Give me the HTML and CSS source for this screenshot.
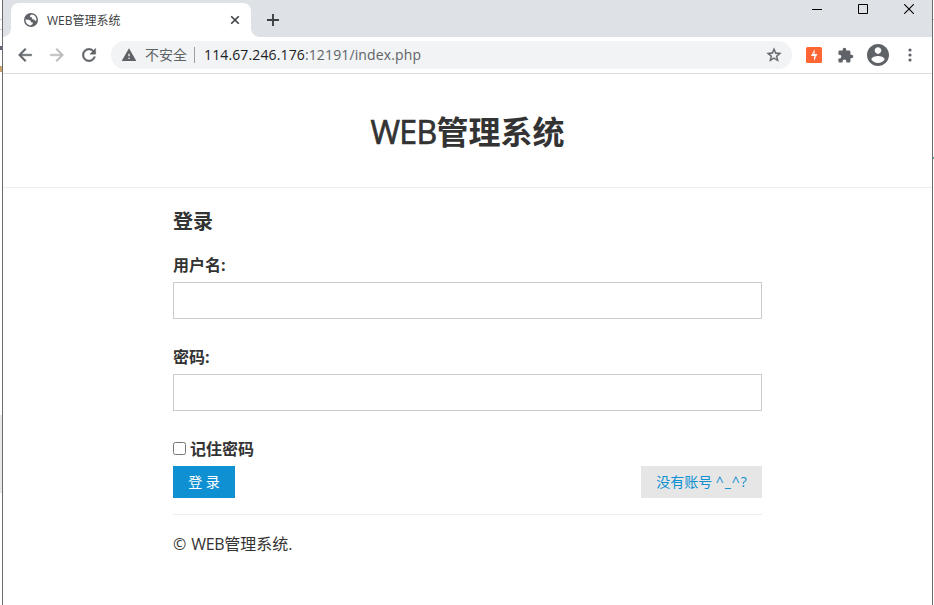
FILE: index.html
```html
<!DOCTYPE html>
<html lang="zh-CN">
<head>
<meta charset="utf-8">
<title>WEB管理系统</title>
<link rel="stylesheet" href="styles.css">
</head>
<body>
<div class="desktop">
  <div class="edge edge-left">
    <i class="sliver s1"></i><i class="sliver s2"></i><i class="sliver s3"></i><i class="sliver s4"></i><i class="sliver s5"></i>
  </div>
  <div class="window">
    <div class="tabstrip">
      <div class="tab">
        <svg class="globe" width="14" height="14" viewBox="0 0 14 14"><circle cx="7" cy="7" r="7" fill="#5f6368"/><path d="M7.600 1.600C6.200 2.200 5.900 3 6.100 3.900L8 4.600 8.300 6.300 10.200 6.500 11.200 7.900 12.500 7.300C12.500 4 10.500 1.800 7.600 1.600ZM1.500 6.500L4.800 6.700 6.900 8 6.800 9.200 8.900 9.400 8.600 11 6.500 12.500C3.500 12 1.400 9.700 1.500 6.500Z" fill="#fff"/></svg>
        <span class="tab-title">WEB<span>管理系统</span></span>
        <svg class="tab-close" width="10" height="10" viewBox="0 0 10 10"><path d="M1.200 1.200L8.800 8.800M8.800 1.200L1.200 8.800" stroke="#3c4043" stroke-width="1.600"/></svg>
      </div>
      <svg class="new-tab" width="12" height="12" viewBox="0 0 12 12"><path d="M6 0V12M0 6H12" stroke="#3c4043" stroke-width="1.900"/></svg>
      <div class="controls">
        <svg width="10" height="10" viewBox="0 0 10 10"><path d="M0 5.500H10" stroke="#000"/></svg>
        <svg width="10" height="10" viewBox="0 0 10 10"><path d="M.5.5H9.500V9.500H.5Z" fill="none" stroke="#000"/></svg>
        <svg width="10" height="10" viewBox="0 0 10 10"><path d="M.2.2L9.800 9.800M9.800.2L.2 9.800" stroke="#000" stroke-width="1.100"/></svg>
      </div>
    </div>
    <div class="toolbar">
      <svg class="nav" width="20" height="20" viewBox="0 0 24 24" fill="#5f6368" stroke="#5f6368" stroke-width=".5"><path d="M20 11H7.830l5.590-5.590L12 4l-8 8 8 8 1.410-1.410L7.830 13H20v-2z"/></svg>
      <svg class="nav" width="20" height="20" viewBox="0 0 24 24" fill="#babcbe" stroke="#babcbe" stroke-width=".5"><path d="M12 4l-1.410 1.410L16.170 11H4v2h12.170l-5.580 5.590L12 20l8-8z"/></svg>
      <svg class="nav" width="20" height="20" viewBox="0 0 24 24" fill="#5f6368" stroke="#5f6368" stroke-width=".5"><path d="M17.650 6.350C16.200 4.900 14.210 4 12 4c-4.420 0-7.990 3.580-7.990 8s3.570 8 7.990 8c3.730 0 6.840-2.550 7.730-6h-2.080c-.82 2.330-3.040 4-5.650 4-3.310 0-6-2.690-6-6s2.690-6 6-6c1.660 0 3.140.69 4.220 1.780L13 11h7V4l-2.350 2.350z"/></svg>
      <div class="omnibox">
        <svg class="warn" width="16" height="16" viewBox="0 0 24 24" fill="#5f6368"><path d="M1 21h22L12 2 1 21zm12-3h-2v-2h2v2zm0-4h-2v-4h2v4z"/></svg>
        <span class="insecure">不安全</span>
        <span class="divider"></span>
        <span class="url"><b>114.67.246.176</b>:12191/index.php</span>
        <svg class="star" width="16" height="16" viewBox="1 1 22 22" fill="#5f6368" stroke="#5f6368" stroke-width=".4"><path d="M22 9.240l-7.190-.62L12 2 9.190 8.630 2 9.240l5.460 4.730L5.820 21 12 17.270 18.180 21l-1.630-7.030L22 9.240zM12 15.400l-3.760 2.270 1-4.280-3.320-2.880 4.380-.38L12 6.100l1.710 4.040 4.380.38-3.320 2.880 1 4.280L12 15.400z"/></svg>
      </div>
      <svg class="burp" width="16" height="16" viewBox="0 0 16 16"><rect width="16" height="16" rx="1.500" fill="#ff6633"/><path d="M8.600 2.200V7.100H11.400L8 13.900V9H5L8.600 2.200Z" fill="#fff"/><path d="M7.800 5.600V7.100H6.900ZM8.800 9H9.700L8.800 10.500Z" fill="#ff6633"/></svg>
      <svg class="puzzle" width="17" height="17" viewBox="0 0 24 24" fill="#5f6368"><path d="M20.500 11H19V7c0-1.100-.9-2-2-2h-4V3.500a2.500 2.500 0 0 0-5 0V5H4c-1.100 0-1.990.9-1.990 2v3.800H3.500a2.700 2.700 0 0 1 0 5.400H2V20c0 1.100.9 2 2 2h3.800v-1.500a2.700 2.700 0 0 1 5.400 0V22H17c1.100 0 2-.9 2-2v-4h1.500a2.500 2.500 0 0 0 0-5z"/></svg>
      <svg class="avatar" width="22" height="22" viewBox="2 2 20 20" fill="#5f6368"><path d="M12 2C6.480 2 2 6.480 2 12s4.480 10 10 10 10-4.480 10-10S17.520 2 12 2zm0 3c1.660 0 3 1.340 3 3s-1.340 3-3 3-3-1.340-3-3 1.340-3 3-3zm0 14.200c-2.500 0-4.710-1.280-6-3.220.03-1.990 4-3.080 6-3.080 1.990 0 5.970 1.090 6 3.080-1.290 1.940-3.500 3.220-6 3.220z"/></svg>
      <svg class="dots" width="4" height="14" viewBox="0 0 4 14" fill="#5f6368"><circle cx="2" cy="2" r="1.600"/><circle cx="2" cy="7" r="1.600"/><circle cx="2" cy="12" r="1.600"/></svg>
    </div>
    <header class="header"><h1><span class="latin">WEB</span><span>管理系统</span></h1></header>
    <main class="content">
      <h3>登录</h3>
      <form>
        <label class="label" for="user">用户名:</label>
        <input class="field" id="user" type="text">
        <label class="label" for="pass">密码:</label>
        <input class="field" id="pass" type="password">
        <label class="remember"><input type="checkbox"><span>记住密码</span></label>
        <div class="actions">
          <button class="btn primary" type="button">登 录</button>
          <button class="btn secondary" type="button">没有账号 <span class="face">^_^?</span></button>
        </div>
      </form>
      <footer class="footer"><span class="copy">©</span><span class="brand">WEB</span>管理系统.</footer>
    </main>
  </div>
  <div class="edge edge-right"><i class="sliver r1"></i><i class="sliver r2"></i></div>
</div>
</body>
</html>
```

FILE: styles.css
```css
* { box-sizing: border-box; }
body {
  margin: 0;
  overflow: hidden;
  background: #fff;
  color: #333;
  font-family: "Open Sans", "Noto Sans CJK SC", sans-serif;
}
svg { display: block; flex: none; }
.desktop { display: grid; grid-template-columns: 2px 931px 1px; height: 605px; }
.edge { position: relative; }
.sliver { position: absolute; left: 0; width: 2px; height: 1px; background: #ccc; }
.s1 { top: 19px; }
.s2 { top: 29px; }
.s3 { top: 46px; height: 4px; background: #667; }
.s4 { top: 66px; height: 6px; background: #c9a46a; }
.s5 { top: 415px; height: 78px; background: #e8e8e8; }
.r1 { top: 19px; width: 1px; }
.r2 { top: 157px; width: 1px; height: 2px; background: #5a8; }
.window { border: solid #6b6b6d; border-width: 0 1px; }

.tabstrip { display: flex; height: 37px; background: #dee1e6; }
.tab {
  position: relative;
  display: flex;
  align-items: center;
  width: 240px;
  height: 34px;
  margin: 3px 0 0 8px;
  padding: 0 11px 0 13px;
  border-radius: 8px 8px 0 0;
  background: #fff;
}
.tab::before, .tab::after {
  content: "";
  position: absolute;
  bottom: 0;
  width: 8px;
  height: 8px;
}
.tab::before { left: -8px; background: radial-gradient(circle at 0 0, transparent 7.5px, #fff 8px); }
.tab::after { right: -8px; background: radial-gradient(circle at 100% 0, transparent 7.5px, #fff 8px); }
.tab-title { margin: 1px 0 0 9px; font-size: 12px; line-height: 16px; color: #3c4043; white-space: nowrap; }
.tab-close { margin-left: auto; }
.new-tab { margin: 14px 0 0 16px; }
.controls { display: flex; gap: 36px; margin: 4px 18px 0 auto; }

.toolbar { display: flex; align-items: center; height: 37px; border-bottom: 1px solid #dadce0; background: #fff; }
.nav { margin-left: 12px; }
.omnibox {
  display: flex;
  align-items: center;
  width: 681px;
  height: 28px;
  margin-left: 12px;
  padding: 0 10px;
  border-radius: 14px;
  background: #f1f3f4;
  color: #5f6368;
  font-size: 14px;
  line-height: 20px;
  white-space: nowrap;
}
.insecure { margin-left: 8px; }
.divider { width: 1px; height: 16px; margin: 0 9px 0 7px; background: #9aa0a6; }
.url { letter-spacing: .13px; }
.url b { color: #202124; font-weight: 400; }
.star { margin-left: auto; }
.burp { margin-left: 14px; }
.puzzle { margin-left: 15px; }
.avatar { margin-left: 13px; }
.dots { margin-left: 19px; }

.header { display: flex; justify-content: center; height: 114px; padding-top: 34px; border-bottom: 1px solid #eee; }
h1 { margin: 0; font-size: 32px; line-height: 48px; font-weight: 700; white-space: nowrap; }
h1 .latin { font-weight: 400; letter-spacing: -.6px; -webkit-text-stroke: .7px #333; }
.content { width: 589px; margin-left: 170px; }
h3 { margin: 0; padding-top: 20px; font-size: 20px; line-height: 28px; font-weight: 700; }
.label { display: block; margin-top: 18px; font-size: 16px; line-height: 24px; font-weight: 700; }
h3 + form .label:first-child { margin-top: 17px; }
.field {
  display: block;
  width: 100%;
  height: 37px;
  margin: 5px 0 26px;
  padding: 8px;
  border: 1px solid #ccc;
  border-radius: 0;
  background: #fff;
}
.remember { display: flex; align-items: center; height: 24px; font-size: 16px; line-height: 24px; font-weight: 700; }
.remember input { width: 13px; height: 13px; margin: 0 4px 2px 0; }
.actions { display: flex; justify-content: space-between; margin-top: 5px; }
.btn { height: 32px; border: 0; padding: 0; font-family: inherit; font-size: 14px; line-height: 20px; white-space: nowrap; }
.primary { width: 62px; background: #0e90d2; color: #fff; }
.secondary { width: 121px; background: #e6e6e6; color: #0e90d2; }
.face { letter-spacing: .9px; margin-right: -.9px; }
.footer { margin-top: 16px; padding-top: 16px; border-top: 1px solid #eee; font-size: 16px; line-height: 26px; white-space: nowrap; }
.copy { margin-right: 5px; }
.brand { letter-spacing: -.4px; }
```
